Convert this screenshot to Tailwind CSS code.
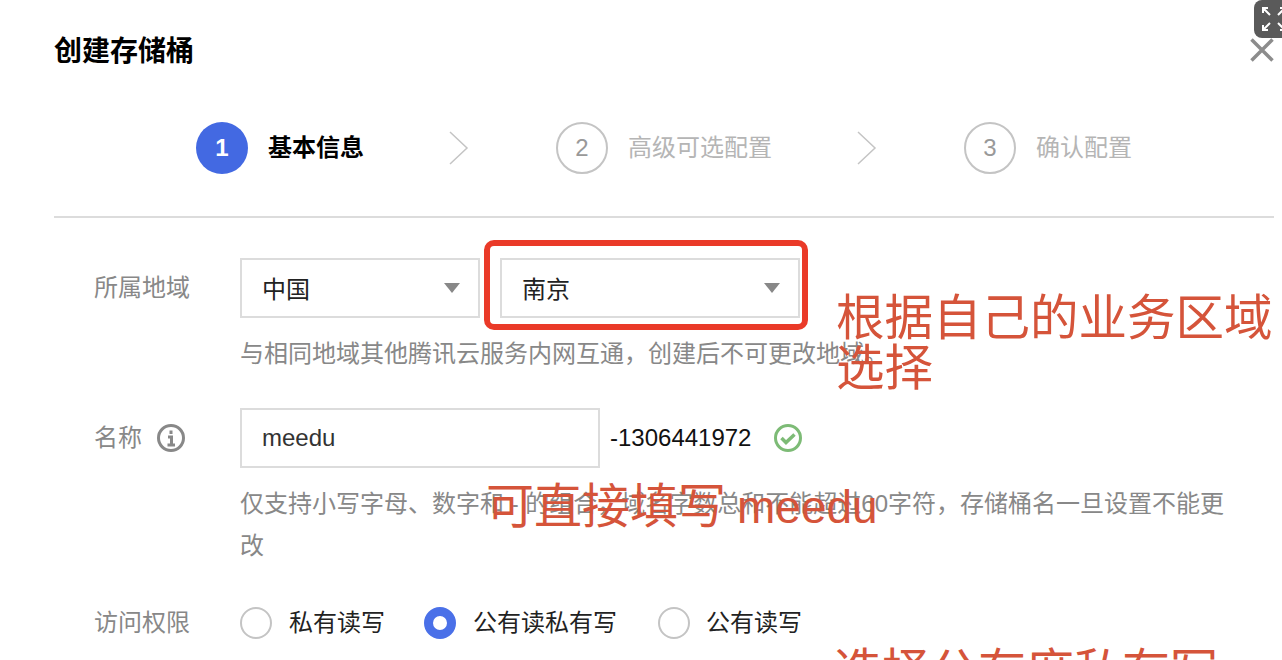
<!DOCTYPE html>
<html lang="zh">
<head>
<meta charset="utf-8">
<title>创建存储桶</title>
<script src="https://cdn.jsdelivr.net/npm/@tailwindcss/browser@4"></script>
</head>
<body class="bg-white">
<div class="relative w-[1282px] h-[660px] overflow-hidden bg-white font-['Liberation_Sans','Noto_Sans_CJK_SC',sans-serif] text-[24px]">

	<!-- modal -->
	<div class="pl-[54px] pr-[8px]">
		<h1 class="pt-[34px] h-[87px] text-[28px] leading-[36px] font-bold text-black">创建存储桶</h1>

		<!-- steps -->
		<div class="flex items-center h-[131px] pb-[7px] pl-[142px] border-b-2 border-[#dcdcdc]">
			<span class="flex items-center justify-center w-[52px] h-[52px] rounded-full bg-[#4369e2] text-white font-bold">1</span>
			<span class="ml-[20px] font-bold text-black">基本信息</span>
			<svg class="ml-[85px] w-[20px] h-[34px]" viewBox="0 0 20 34" fill="none" stroke="#c4c4c4" stroke-width="1.5"><path d="M1 1l17 16L1 33"/></svg>
			<span class="ml-[87px] flex items-center justify-center w-[52px] h-[52px] rounded-full border-2 border-[#c4c4c4] text-[#999]">2</span>
			<span class="ml-[20px] text-[#b5b5b5]">高级可选配置</span>
			<svg class="ml-[85px] w-[20px] h-[34px]" viewBox="0 0 20 34" fill="none" stroke="#c4c4c4" stroke-width="1.5"><path d="M1 1l17 16L1 33"/></svg>
			<span class="ml-[87px] flex items-center justify-center w-[52px] h-[52px] rounded-full border-2 border-[#c4c4c4] text-[#999]">3</span>
			<span class="ml-[20px] text-[#b5b5b5]">确认配置</span>
		</div>

		<!-- form -->
		<div class="grid grid-cols-[186px_1fr] pt-[40px]">
			<div class="pl-[40px] pt-[12px] leading-[36px] text-[#888]">所属地域</div>
			<div>
				<div class="flex gap-[20px]">
					<div class="flex items-center justify-between w-[240px] h-[60px] pl-[20px] pr-[18px] border-2 border-[#dcdcdc] text-[#222]">
						<span class="pt-[4px]">中国</span>
						<span class="w-0 h-0 border-x-[8px] border-x-transparent border-t-[10px] border-t-[#888]"></span>
					</div>
					<div class="flex items-center justify-between w-[300px] h-[60px] pl-[20px] pr-[18px] border-2 border-[#dcdcdc] text-[#222]">
						<span class="pt-[4px]">南京</span>
						<span class="w-0 h-0 border-x-[8px] border-x-transparent border-t-[10px] border-t-[#888]"></span>
					</div>
				</div>
				<p class="mt-[15px] leading-[42px] text-[#888]">与相同地域其他腾讯云服务内网互通，创建后不可更改地域。</p>
			</div>

			<div class="flex items-start pl-[40px] pt-[33px] leading-[36px] text-[#888]">
				<span class="pt-[12px]">名称</span>
				<svg class="ml-[14px] mt-[15px] w-[30px] h-[30px]" viewBox="0 0 30 30" fill="none"><circle cx="15" cy="15" r="12.5" stroke="#888" stroke-width="3"/><path d="M15 7.5v3.5M12 14h3.5v8M11.5 22h7.500" stroke="#888" stroke-width="3"/></svg>
			</div>
			<div class="pt-[33px]">
				<div class="flex items-center">
					<div class="flex items-center w-[360px] h-[60px] pl-[20px] border-2 border-[#dcdcdc] text-[#333]">meedu</div>
					<span class="ml-[10px] text-[#111]">-1306441972</span>
					<svg class="ml-[22px] w-[30px] h-[30px]" viewBox="0 0 30 30" fill="none"><circle cx="15" cy="15" r="12.5" stroke="#7dbb76" stroke-width="3"/><path d="M8.500 15l4.500 4.500 8.500-8" stroke="#7dbb76" stroke-width="3.500"/></svg>
				</div>
				<p class="mt-[15px] w-[1000px] leading-[42px] text-[#888]">仅支持小写字母、数字和 - 的组合，域名字数总和不能超过60字符，存储桶名一旦设置不能更改</p>
			</div>

			<div class="pl-[40px] pt-[38px] leading-[36px] text-[#888]">访问权限</div>
			<div class="flex items-center pt-[38px] h-[74px]">
				<span class="w-[32px] h-[32px] rounded-full border-2 border-[#c4c4c4]"></span>
				<span class="ml-[17px] text-[#222]">私有读写</span>
				<span class="ml-[39px] w-[32px] h-[32px] rounded-full border-[9px] border-[#4a70e8]"></span>
				<span class="ml-[17px] text-[#222]">公有读私有写</span>
				<span class="ml-[41px] w-[32px] h-[32px] rounded-full border-2 border-[#c4c4c4]"></span>
				<span class="ml-[16px] text-[#222]">公有读写</span>
			</div>
		</div>
	</div>

	<!-- top right overlay -->
	<div class="absolute left-[1254px] top-0 w-[40px] h-[38px] rounded-lg bg-[#5a5a5a]">
		<svg class="absolute left-[8px] top-[7px] w-[24px] h-[24px]" viewBox="0 0 24 24" fill="none" stroke="#fff" stroke-width="2"><path d="M1 1l7 7M1 6V1h5M23 1l-7 7M18 1h5v5M1 23l7-7M1 18v5h5M23 23l-7-7M23 18v5h-5"/></svg>
	</div>
	<svg class="absolute left-[1250px] top-[38px] w-[24px] h-[24px]" viewBox="0 0 24 24" fill="none" stroke="#8c8c8c" stroke-width="3.500"><path d="M1.500 1.500l21 21M22.500 1.500l-21 21"/></svg>

	<!-- red annotations -->
	<div class="absolute left-[484px] top-[240px] w-[324px] h-[90px] rounded-[10px] border-[6px] border-[#ea3a28]"></div>
	<div class="absolute left-[836px] top-[293px] w-[446px] text-[48.5px] leading-[50px] text-[#d5543a]">根据自己的业务区域选择</div>
	<div class="absolute left-[486px] top-[477px] text-[48px] leading-[60px] text-[#d5543a] whitespace-nowrap">可直接填写<span class="ml-[11px] text-[46px]">meedu</span></div>
	<div class="absolute left-[834px] top-[645px] text-[48px] leading-[53px] text-[#d5543a] whitespace-nowrap">选择公有度私有写</div>
</div>
</body>
</html>
